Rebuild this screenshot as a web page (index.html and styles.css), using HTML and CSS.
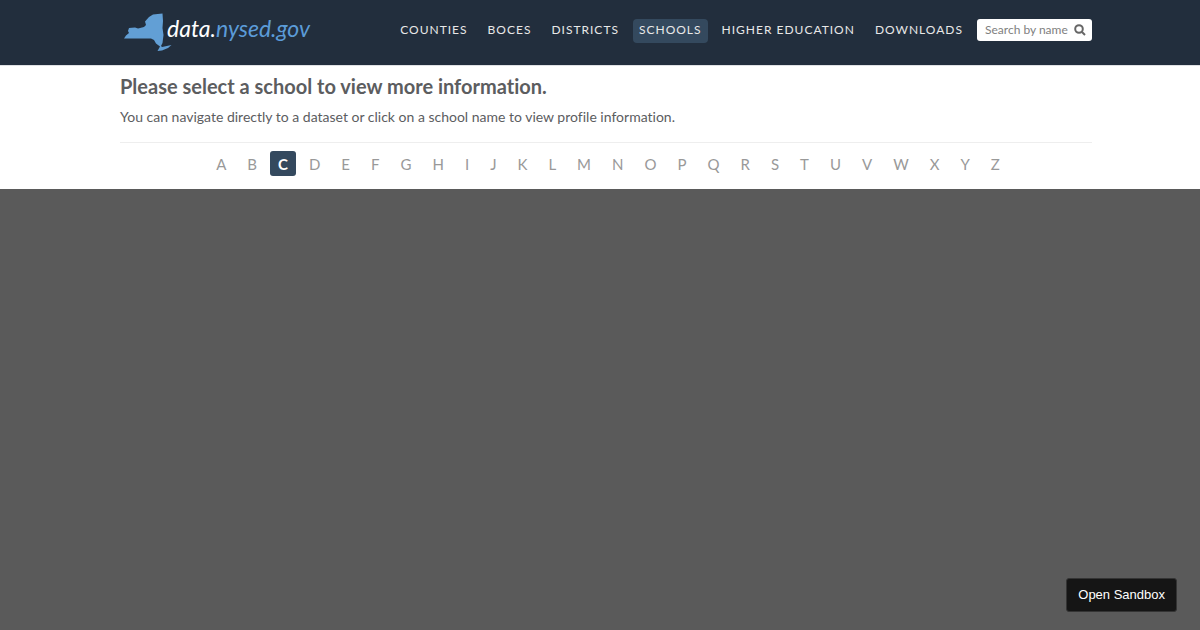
FILE: index.html
```html
<!DOCTYPE html>
<html lang="en">
<head>
    <meta charset="UTF-8">
    <meta name="viewport" content="width=device-width, initial-scale=1.0">
    <title>data.nysed.gov - Schools</title>
    <link rel="stylesheet" href="styles.css">
</head>
<body>
    <header class="site-header">
        <div class="container header-row">
            <a class="logo" href="#">
                <svg class="logo-state" viewBox="0 0 50 42" aria-hidden="true">
                    <path d="M1 26.500 L3 23.500 L6 21 L5 19 L6 16 L12 15.500 L15 16.500 L21 15 L23 13 L22 9.500 L26 5 L30 2.500 L39.500 1.500 L40 9 L39.500 16 L40.500 23 L39.500 31 L38 34 L39 35 L48.500 33 L45 36 L39 38.500 L34.500 39 L37 34.500 L33 31.500 L31 28 L28 26.500 Z"/>
                </svg>
                <span class="logo-text">data.<span class="logo-domain">nysed.gov</span></span>
            </a>
            <nav class="main-nav">
                <a href="#">COUNTIES</a>
                <a href="#">BOCES</a>
                <a href="#">DISTRICTS</a>
                <a class="active" href="#">SCHOOLS</a>
                <a href="#">HIGHER EDUCATION</a>
                <a href="#">DOWNLOADS</a>
            </nav>
            <form class="search" role="search">
                <input type="text" placeholder="Search by name" aria-label="Search by name">
                <button type="submit" aria-label="Search">
                    <svg viewBox="0 0 12 12" aria-hidden="true">
                        <circle cx="5" cy="5" r="3.800"/>
                        <path d="M8 8 L11 11"/>
                    </svg>
                </button>
            </form>
        </div>
    </header>

    <main class="intro">
        <div class="container">
            <h1>Please select a school to view more information.</h1>
            <p>You can navigate directly to a dataset or click on a school name to view profile information.</p>
            <nav class="letters" aria-label="Schools by letter">
                <a href="#">A</a>
                <a href="#">B</a>
                <a class="active" href="#">C</a>
                <a href="#">D</a>
                <a href="#">E</a>
                <a href="#">F</a>
                <a href="#">G</a>
                <a href="#">H</a>
                <a href="#">I</a>
                <a href="#">J</a>
                <a href="#">K</a>
                <a href="#">L</a>
                <a href="#">M</a>
                <a href="#">N</a>
                <a href="#">O</a>
                <a href="#">P</a>
                <a href="#">Q</a>
                <a href="#">R</a>
                <a href="#">S</a>
                <a href="#">T</a>
                <a href="#">U</a>
                <a href="#">V</a>
                <a href="#">W</a>
                <a href="#">X</a>
                <a href="#">Y</a>
                <a href="#">Z</a>
            </nav>
        </div>
    </main>

    <button class="sandbox-btn" type="button">Open Sandbox</button>
</body>
</html>
```
FILE: styles.css
```css
body {
    margin: 0;
    background: #5a5a5a;
    color: #5c5d5f;
    font-family: Lato, sans-serif;
    font-variant-ligatures: none;
}

a {
    text-decoration: none;
}

.container {
    margin: 0 9% 0 10%;
}

/* Header */
.site-header {
    border-bottom: 1px solid #dfe1e4;
    background: #222e3d;
}

.header-row {
    display: flex;
    align-items: flex-start;
    justify-content: space-between;
    height: 65px;
}

.logo {
    display: flex;
    padding: 12px 0 0 3px;
}

.logo-state {
    width: 50px;
    height: 42px;
    margin-right: -6px;
    fill: #629fd5;
}

.logo-text {
    color: #fff;
    font-size: 23px;
    font-style: italic;
    line-height: 32px;
}

.logo-domain {
    color: #5b9bd8;
}

.main-nav {
    display: flex;
    gap: 8px;
    margin: 19px 0 0 auto;
}

.main-nav a {
    padding: 0 6px 2px;
    border-radius: 4px;
    color: #e8e8e8;
    font-size: 12px;
    letter-spacing: 1px;
    line-height: 22px;
    white-space: nowrap;
}

.main-nav .active {
    background: #34495e;
}

.search {
    display: flex;
    align-items: center;
    box-sizing: border-box;
    width: 115px;
    height: 22px;
    margin: 19px 0 0 8px;
    padding: 0 6px 0 8px;
    border-radius: 3px;
    background: #fff;
}

.search input {
    flex: 1;
    min-width: 0;
    padding: 0 0 1px;
    border: none;
    outline: none;
    background: transparent;
    font-family: inherit;
    font-size: 12px;
}

.search input::placeholder {
    color: #808080;
}

.search button {
    display: flex;
    padding: 0;
    border: none;
    background: none;
    cursor: pointer;
}

.search svg {
    width: 12px;
    height: 12px;
    fill: none;
    stroke: #666;
    stroke-width: 2;
}

/* Intro and letter picker */
.intro {
    padding: 7px 0 13px;
    background: #fff;
}

.intro h1 {
    margin: 0;
    font-size: 20px;
    line-height: 26px;
}

.intro p {
    margin: 7px 0 14px;
    font-size: 14px;
    line-height: 22px;
}

.letters {
    display: flex;
    justify-content: center;
    gap: 5px;
    padding: 8px 0 0 4px;
    border-top: 1px solid #eee;
}

.letters a {
    padding: 1px 8px 0;
    border-radius: 3px;
    color: #999;
    font-size: 15px;
    line-height: 24px;
}

.letters .active {
    background: #34495e;
    color: #fff;
    font-weight: bold;
}

.sandbox-btn {
    position: fixed;
    right: 23px;
    bottom: 18px;
    height: 34px;
    padding: 0 11px 2px;
    border: 1px solid #343434;
    border-radius: 3px;
    background: #151515;
    color: #fff;
    font-family: "Liberation Sans", Arial, sans-serif;
    font-size: 13px;
    cursor: pointer;
}
```
